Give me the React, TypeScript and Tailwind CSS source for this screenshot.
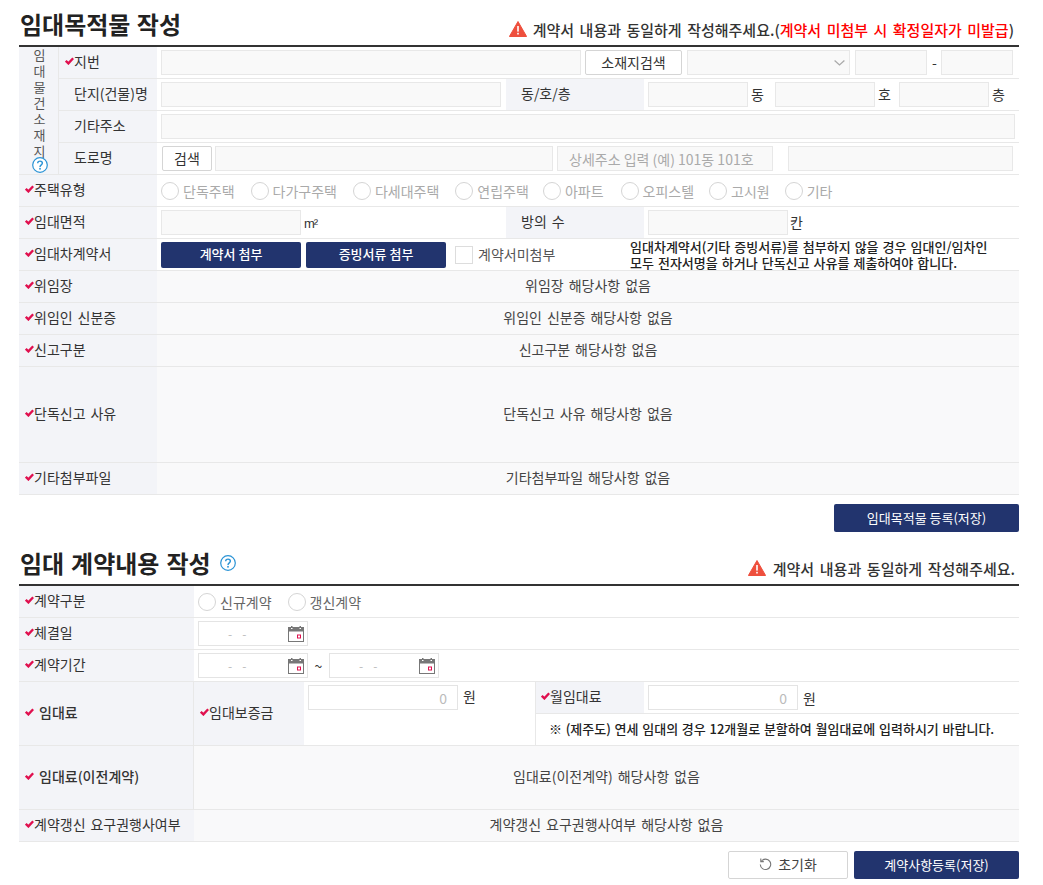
import type { ReactNode } from 'react';

const inputBase = 'block h-[25px] shrink-0 border border-[#e8e8e8] bg-[#f9f9f9] rounded-none outline-none text-[14px]';

const Check = () => (
  <svg width="9" height="8" viewBox="0 0 9 8" className="shrink-0">
    <path d="M0.8 3.8 L3.4 6.4 L8.2 1.2" fill="none" stroke="#e0104f" strokeWidth="2.4" />
  </svg>
);

const Warn = () => (
  <svg width="18" height="16" viewBox="0 0 18 16" className="shrink-0">
    <path d="M9 0.5 L17.6 15.5 L0.4 15.5 Z" fill="#ee4f3d" stroke="#ee4f3d" strokeLinejoin="round" />
    <rect x="8.2" y="5" width="1.6" height="5.6" fill="#fff" />
    <rect x="8.2" y="11.8" width="1.6" height="1.7" fill="#fff" />
  </svg>
);

const Help = () => (
  <svg width="16" height="16" viewBox="0 0 16 16" className="shrink-0">
    <circle cx="8" cy="8" r="7.3" fill="#fff" stroke="#2a93d5" strokeWidth="1.2" />
    <path d="M5.7 6.2 C5.7 3.4 10.4 3.4 10.4 6.1 C10.4 7.9 8 7.8 8 9.9" fill="none" stroke="#2a93d5" strokeWidth="1.4" />
    <rect x="7.2" y="10.9" width="1.6" height="1.7" fill="#2a93d5" />
  </svg>
);

const Calendar = () => (
  <svg width="16" height="16" viewBox="0 0 16 16" className="shrink-0">
    <rect x="0.5" y="1.5" width="15" height="14" fill="#fff" stroke="#777" />
    <rect x="0" y="1" width="16" height="4.5" fill="#777" />
    <rect x="3" y="0" width="1.5" height="3" fill="#777" />
    <rect x="11.5" y="0" width="1.5" height="3" fill="#777" />
    <rect x="3" y="2" width="1.5" height="1" fill="#fff" />
    <rect x="11.5" y="2" width="1.5" height="1" fill="#fff" />
    <rect x="9.5" y="9" width="3" height="3" fill="#fff" stroke="#e0104f" />
  </svg>
);

const Th = ({ w, children, check, className = '' }: { w: string; children: ReactNode; check?: boolean; className?: string }) => (
  <div className={`flex items-center bg-[#f3f4f8] shrink-0 h-full pb-[3px] ${w} ${className}`}>
    {check && <Check />}
    {children}
  </div>
);

const Row = ({ h = 'h-[32px]', children, muted }: { h?: string; children: ReactNode; muted?: boolean }) => (
  <div className={`flex items-center border-b border-[#e8e8e8] [&>span]:-translate-y-px ${h} ${muted ? 'bg-[#f9f9fa]' : ''}`}>{children}</div>
);

const NoneRow = ({ label, text, h, w = 'w-[138px]' }: { label: ReactNode; text: string; h?: string; w?: string }) => (
  <Row h={h} muted>
    <Th w={w} check className="pl-[6px]">{label}</Th>
    <div className="flex-1 text-center text-[#444] pb-[3px]">{text}</div>
  </Row>
);

const Radio = ({ label, className = '' }: { label: string; className?: string }) => (
  <label className={`flex items-center ${className}`}>
    <input type="radio" disabled className="appearance-none w-[18px] h-[18px] rounded-full border border-[#d5d5d5] bg-white shrink-0" />
    <span className="ml-[4px]">{label}</span>
  </label>
);

const DateBox = () => (
  <div className="flex items-center w-[110px] h-[25px] border border-[#e4e4e4] bg-white shrink-0">
    <span className="ml-[29px] text-[#bbb] text-[12px] w-[47px] tracking-[10px]">--</span>
    <span className="ml-[13px]"><Calendar /></span>
  </div>
);

export default function App() {
  return (
    <div className="w-[1000px] ml-[19px] text-[14px] text-[#333] font-['Noto_Sans_CJK_KR','Noto_Sans',sans-serif] leading-none [word-spacing:1.8px]">
      {/* 임대목적물 */}
      <div className="flex items-end justify-between h-[47px] border-b-2 border-[#333] pb-[8px] pr-[5px]">
        <h1 className="ml-[1px] text-[24px] font-bold text-[#222] leading-[30px] -mb-[2px] [word-spacing:1px]">임대목적물 작성</h1>
        <div className="flex items-center text-[15px] font-medium [word-spacing:2.1px]">
          <Warn />
          <span className="ml-[6px]">계약서 내용과 동일하게 작성해주세요.(<span className="text-[#f00]">계약서 미첨부 시 확정일자가 미발급</span>)</span>
        </div>
      </div>

      <div className="flex h-[128px]">
        <div className="w-[40px] shrink-0 bg-[#f3f4f8] flex flex-col items-center pl-[2px] text-[13px] text-[#555] leading-[16px] border-r border-b border-[#e8e8e8]">
          {['임', '대', '물', '건', '소', '재', '지'].map((c) => (
            <span key={c}>{c}</span>
          ))}
          <span className="-mt-[2px]"><Help /></span>
        </div>
        <div className="flex-1">
          <Row>
            <Th w="w-[98px]" check className="pl-[6px]">지번</Th>
            <input disabled className={`${inputBase} ml-[4px] w-[420px]`} />
            <button className="ml-[4px] w-[97px] h-[25px] pb-[2px] border border-[#d5d5d5] bg-white rounded-[2px]">소재지검색</button>
            <div className={`${inputBase} ml-[5px] w-[163px] flex items-center justify-end pr-[4px]`}>
              <svg width="11" height="6" viewBox="0 0 11 6"><path d="M0.6 0.6 L5.5 5 L10.4 0.6" fill="none" stroke="#aaa" strokeWidth="1.3" /></svg>
            </div>
            <input disabled className={`${inputBase} ml-[5px] w-[72px]`} />
            <span className="ml-[5px] w-[9px]">-</span>
            <input disabled className={`${inputBase} w-[72px]`} />
          </Row>
          <Row>
            <Th w="w-[98px]" className="pl-[15px]">단지(건물)명</Th>
            <input disabled className={`${inputBase} ml-[4px] w-[340px]`} />
            <Th w="w-[138px] ml-[5px]" className="pl-[15px]">동/호/층</Th>
            <input disabled className={`${inputBase} ml-[4px] w-[100px]`} />
            <span className="ml-[3px] w-[24px]">동</span>
            <input disabled className={`${inputBase} w-[100px]`} />
            <span className="ml-[3px] w-[21px]">호</span>
            <input disabled className={`${inputBase} w-[90px]`} />
            <span className="ml-[3px]">층</span>
          </Row>
          <Row>
            <Th w="w-[98px]" className="pl-[15px]">기타주소</Th>
            <input disabled className={`${inputBase} ml-[4px] w-[854px]`} />
          </Row>
          <Row>
            <Th w="w-[98px]" className="pl-[15px]">도로명</Th>
            <button className="ml-[5px] w-[50px] h-[25px] pb-[2px] border border-[#d5d5d5] bg-white rounded-[2px]">검색</button>
            <input disabled className={`${inputBase} ml-[3px] w-[338px]`} />
            <input disabled placeholder="상세주소 입력 (예) 101동 101호" className={`${inputBase} ml-[4px] w-[216px] pl-[11px] placeholder:text-[#aaa]`} />
            <input disabled className={`${inputBase} ml-[15px] w-[225px]`} />
          </Row>
        </div>
      </div>

      <Row>
        <Th w="w-[138px]" check className="pl-[6px]">주택유형</Th>
        <div className="flex items-center ml-[4px] text-[#aaa]">
          <Radio label="단독주택" />
          <Radio label="다가구주택" className="ml-[16px]" />
          <Radio label="다세대주택" className="ml-[16px]" />
          <Radio label="연립주택" className="ml-[16px]" />
          <Radio label="아파트" className="ml-[14px]" />
          <Radio label="오피스텔" className="ml-[17px]" />
          <Radio label="고시원" className="ml-[15px]" />
          <Radio label="기타" className="ml-[15px]" />
        </div>
      </Row>
      <Row>
        <Th w="w-[138px]" check className="pl-[6px]">임대면적</Th>
        <input disabled className={`${inputBase} ml-[4px] w-[140px]`} />
        <span className="ml-[3px] mt-[4px] w-[202px] text-[13px] tracking-[-1px] font-['Liberation_Sans',sans-serif]">m²</span>
        <Th w="w-[138px]" className="pl-[15px]">방의 수</Th>
        <input disabled className={`${inputBase} ml-[4px] w-[140px]`} />
        <span className="ml-[2px]">칸</span>
      </Row>
      <Row>
        <Th w="w-[138px]" check className="pl-[6px]">임대차계약서</Th>
        <button className="ml-[4px] w-[140px] h-[26px] pb-[2px] bg-[#22346e] text-white text-[13px] rounded-[2px] font-medium">계약서 첨부</button>
        <button className="ml-[5px] w-[140px] h-[26px] pb-[2px] bg-[#22346e] text-white text-[13px] rounded-[2px] font-medium">증빙서류 첨부</button>
        <input type="checkbox" disabled className="appearance-none ml-[9px] w-[18px] h-[18px] border border-[#ddd] bg-white shrink-0" />
        <span className="ml-[5px] w-[152px] text-[#555]">계약서미첨부</span>
        <p className="leading-[16px] text-[13px] font-medium text-[#222] whitespace-nowrap [word-spacing:1.1px]">
          임대차계약서(기타 증빙서류)를 첨부하지 않을 경우 임대인/임차인
          <br />
          모두 전자서명을 하거나 단독신고 사유를 제출하여야 합니다.
        </p>
      </Row>
      <NoneRow label="위임장" text="위임장 해당사항 없음" />
      <NoneRow label="위임인 신분증" text="위임인 신분증 해당사항 없음" />
      <NoneRow label="신고구분" text="신고구분 해당사항 없음" />
      <NoneRow label="단독신고 사유" text="단독신고 사유 해당사항 없음" h="h-[96px]" />
      <NoneRow label="기타첨부파일" text="기타첨부파일 해당사항 없음" />

      <div className="flex justify-end mt-[9px]">
        <button className="w-[185px] h-[28px] pb-[2px] bg-[#22346e] text-white text-[13px] rounded-[2px]">임대목적물 등록(저장)</button>
      </div>

      {/* 임대 계약내용 */}
      <div className="flex items-end justify-between h-[54px] border-b-2 border-[#333] pb-[8px] pr-[4px]">
        <div className="flex items-center ml-[1px] -mb-[2px]">
          <h2 className="text-[24px] font-bold text-[#222] leading-[30px] [word-spacing:1.5px]">임대 계약내용 작성</h2>
          <span className="ml-[9px]"><Help /></span>
        </div>
        <div className="flex items-center text-[15px] font-medium [word-spacing:2.3px]">
          <Warn />
          <span className="ml-[7px]">계약서 내용과 동일하게 작성해주세요.</span>
        </div>
      </div>

      <Row>
        <Th w="w-[175px]" check className="pl-[6px]">계약구분</Th>
        <div className="flex items-center ml-[4px] text-[#666]">
          <Radio label="신규계약" />
          <Radio label="갱신계약" className="ml-[16px]" />
        </div>
      </Row>
      <Row>
        <Th w="w-[175px]" check className="pl-[6px]">체결일</Th>
        <div className="ml-[4px]"><DateBox /></div>
      </Row>
      <Row>
        <Th w="w-[175px]" check className="pl-[6px]">계약기간</Th>
        <div className="ml-[4px] flex items-center">
          <DateBox />
          <span className="w-[21px] text-center">~</span>
          <DateBox />
        </div>
      </Row>
      <Row h="h-[64px]">
        <Th w="w-[175px]" check className="pl-[6px] border-r border-[#e8e8e8] font-medium">
          <span className="ml-[5px]">임대료</span>
        </Th>
        <Th w="w-[110px]" check className="pl-[6px]">임대보증금</Th>
        <div className="w-[231px] h-full pl-[4px] pt-[3px] flex items-start">
          <input disabled value="0" className="block w-[150px] h-[25px] border border-[#e4e4e4] bg-white text-right pr-[10px] text-[#bbb] outline-none" />
          <span className="ml-[5px] mt-[4px]">원</span>
        </div>
        <div className="flex-1 h-full border-l border-[#e8e8e8]">
          <div className="flex items-center h-[32px] border-b border-[#e8e8e8]">
            <Th w="w-[108px]" check className="pl-[5px]">월임대료</Th>
            <input disabled value="0" className="block ml-[4px] w-[150px] h-[25px] border border-[#e4e4e4] bg-white text-right pr-[10px] text-[#bbb] outline-none" />
            <span className="ml-[5px]">원</span>
          </div>
          <div className="flex items-center h-[31px] pl-[13px] pb-[2px] text-[13px] font-medium text-[#222] [word-spacing:0.8px]">※ (제주도) 연세 임대의 경우 12개월로 분할하여 월임대료에 입력하시기 바랍니다.</div>
        </div>
      </Row>
      <Row h="h-[64px]" muted>
        <Th w="w-[175px]" check className="pl-[6px] border-r border-[#e8e8e8] font-medium">
          <span className="ml-[5px]">임대료(이전계약)</span>
        </Th>
        <div className="flex-1 text-center text-[#444] pb-[3px]">임대료(이전계약) 해당사항 없음</div>
      </Row>
      <NoneRow w="w-[175px]" label="계약갱신 요구권행사여부" text="계약갱신 요구권행사여부 해당사항 없음" />

      <div className="flex justify-end mt-[9px]">
        <button className="flex items-center justify-center w-[120px] h-[28px] pb-[2px] border border-[#d5d5d5] bg-white rounded-[2px] text-[#444]">
          <svg width="13" height="13" viewBox="0 0 13 13" className="mr-[6px]">
            <path d="M2.5 3 A5.2 5.2 0 1 1 1.3 6.5" fill="none" stroke="#777" strokeWidth="1.1" />
            <path d="M1.8 0.6 V3.6 H4.8" fill="none" stroke="#777" strokeWidth="1.1" />
          </svg>
          초기화
        </button>
        <button className="ml-[6px] w-[165px] h-[28px] pb-[2px] bg-[#22346e] text-white text-[13px] rounded-[2px]">계약사항등록(저장)</button>
      </div>
    </div>
  );
}
